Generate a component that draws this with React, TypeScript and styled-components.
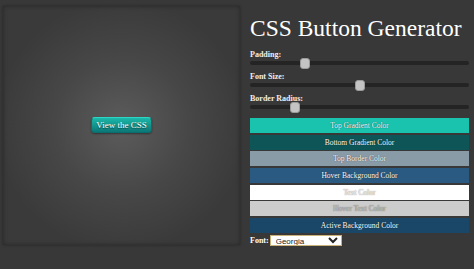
import styled, { createGlobalStyle } from "styled-components";

const GlobalStyle = createGlobalStyle`
	html, body {
		margin: 0;
		padding: 0;
		background: #383838;
		font-family: "Liberation Serif", "DejaVu Serif", serif;
	}
`;

const sliders = [
	{ label: "Padding:", value: 24 },
	{ label: "Font Size:", value: 50 },
	{ label: "Border Radius:", value: 19 },
];

const colorButtons = [
	{ label: "Top Gradient Color", bg: "#19c3ae", fg: "#ffffff" },
	{ label: "Bottom Gradient Color", bg: "#0d5556", fg: "#ffffff" },
	{ label: "Top Border Color", bg: "#8a9ba8", fg: "#ffffff" },
	{ label: "Hover Background Color", bg: "#2a5a82", fg: "#ffffff" },
	{ label: "Text Color", bg: "#ffffff", fg: "#ffffff" },
	{ label: "Hover Text Color", bg: "#cccccc", fg: "#cccccc" },
	{ label: "Active Background Color", bg: "#1a4767", fg: "#ffffff" },
];

export default function App() {
	return (
		<>
			<GlobalStyle />
			<Page>
				<Preview>
					<PreviewButton>View the CSS</PreviewButton>
				</Preview>
				<Controls>
					<Title>CSS Button Generator</Title>
					{sliders.map((s) => (
						<SliderGroup key={s.label}>
							<SliderLabel>{s.label}</SliderLabel>
							<Range type="range" min={0} max={100} defaultValue={s.value} />
						</SliderGroup>
					))}
					<ColorList>
						{colorButtons.map((c) => (
							<ColorButton key={c.label} $bg={c.bg} $fg={c.fg}>
								{c.label}
							</ColorButton>
						))}
					</ColorList>
					<FontRow>
						<FontLabel>Font:</FontLabel>
						<FontSelect defaultValue="Georgia">
							<option>Georgia</option>
							<option>Arial</option>
							<option>Verdana</option>
						</FontSelect>
					</FontRow>
				</Controls>
			</Page>
		</>
	);
}

const Page = styled.div`
	display: flex;
	width: 474px;
	height: 269px;
	padding: 6px 0 0 3px;
	box-sizing: border-box;
	overflow: hidden;
`;

const Preview = styled.div`
	width: 237px;
	height: 239px;
	flex-shrink: 0;
	display: flex;
	align-items: center;
	justify-content: center;
	padding-bottom: 2px;
	box-sizing: border-box;
	background: radial-gradient(circle at 50% 50%, #5c5c5c 0%, #474747 40%, #3a3a3a 75%);
	box-shadow: inset 0 0 4px rgba(0, 0, 0, 0.35), 0 0 3px rgba(0, 0, 0, 0.3);
`;

const PreviewButton = styled.button`
	font-family: "Liberation Serif", serif;
	font-size: 9px;
	color: #ffffff;
	padding: 0 4px;
	height: 16px;
	border: 1px solid #0b6e6e;
	border-top-color: #2fd6c4;
	border-radius: 4px;
	background: linear-gradient(#1ab8a8, #0c7676);
	text-shadow: 0 1px 1px rgba(0, 0, 0, 0.5);
	box-shadow: 0 1px 2px rgba(0, 0, 0, 0.4);
	cursor: pointer;
`;

const Controls = styled.div`
	flex: 1;
	display: flex;
	flex-direction: column;
	padding: 0 5px 0 10px;
`;

const Title = styled.h1`
	margin: 8px 0 0;
	font-size: 23.5px;
	line-height: 28px;
	font-weight: normal;
	color: #ffffff;
	white-space: nowrap;
`;

const SliderGroup = styled.div`
	display: flex;
	flex-direction: column;
	height: 22px;
	&:first-of-type {
		margin-top: 9px;
	}
`;

const SliderLabel = styled.label`
	font-size: 8px;
	line-height: 8px;
	font-weight: bold;
	color: #eeeeee;
	height: 8px;
`;

const Range = styled.input`
	appearance: none;
	-webkit-appearance: none;
	width: 219px;
	height: 4px;
	margin: 2px 0 0;
	background: #242424;
	border-radius: 2px;
	outline: none;

	&::-webkit-slider-thumb {
		-webkit-appearance: none;
		width: 10px;
		height: 11px;
		border-radius: 3px;
		background: #c4c4c4;
		border: 1px solid #9a9a9a;
		box-sizing: border-box;
	}
`;

const ColorList = styled.div`
	display: flex;
	flex-direction: column;
	gap: 1.67px;
	margin-top: 1px;
`;

const ColorButton = styled.div<{ $bg: string; $fg: string }>`
	width: 219px;
	height: 15px;
	display: flex;
	align-items: center;
	justify-content: center;
	background: ${(p) => p.$bg};
	color: ${(p) => p.$fg};
	font-size: 7.5px;
	text-shadow: 0 0 1px rgba(0, 0, 0, 0.8);
	cursor: pointer;
`;

const FontRow = styled.div`
	display: flex;
	align-items: center;
	gap: 1px;
	margin-top: 2px;
`;

const FontLabel = styled.span`
	font-size: 8px;
	font-weight: bold;
	color: #ffffff;
`;

const FontSelect = styled.select`
	width: 72px;
	height: 11px;
	padding: 0 0 0 1px;
	font-family: "Liberation Sans", Arial, sans-serif;
	font-size: 8px;
	border: 1px solid #c9b27a;
	background: #ffffff;
	color: #222222;
	box-sizing: border-box;
`;
